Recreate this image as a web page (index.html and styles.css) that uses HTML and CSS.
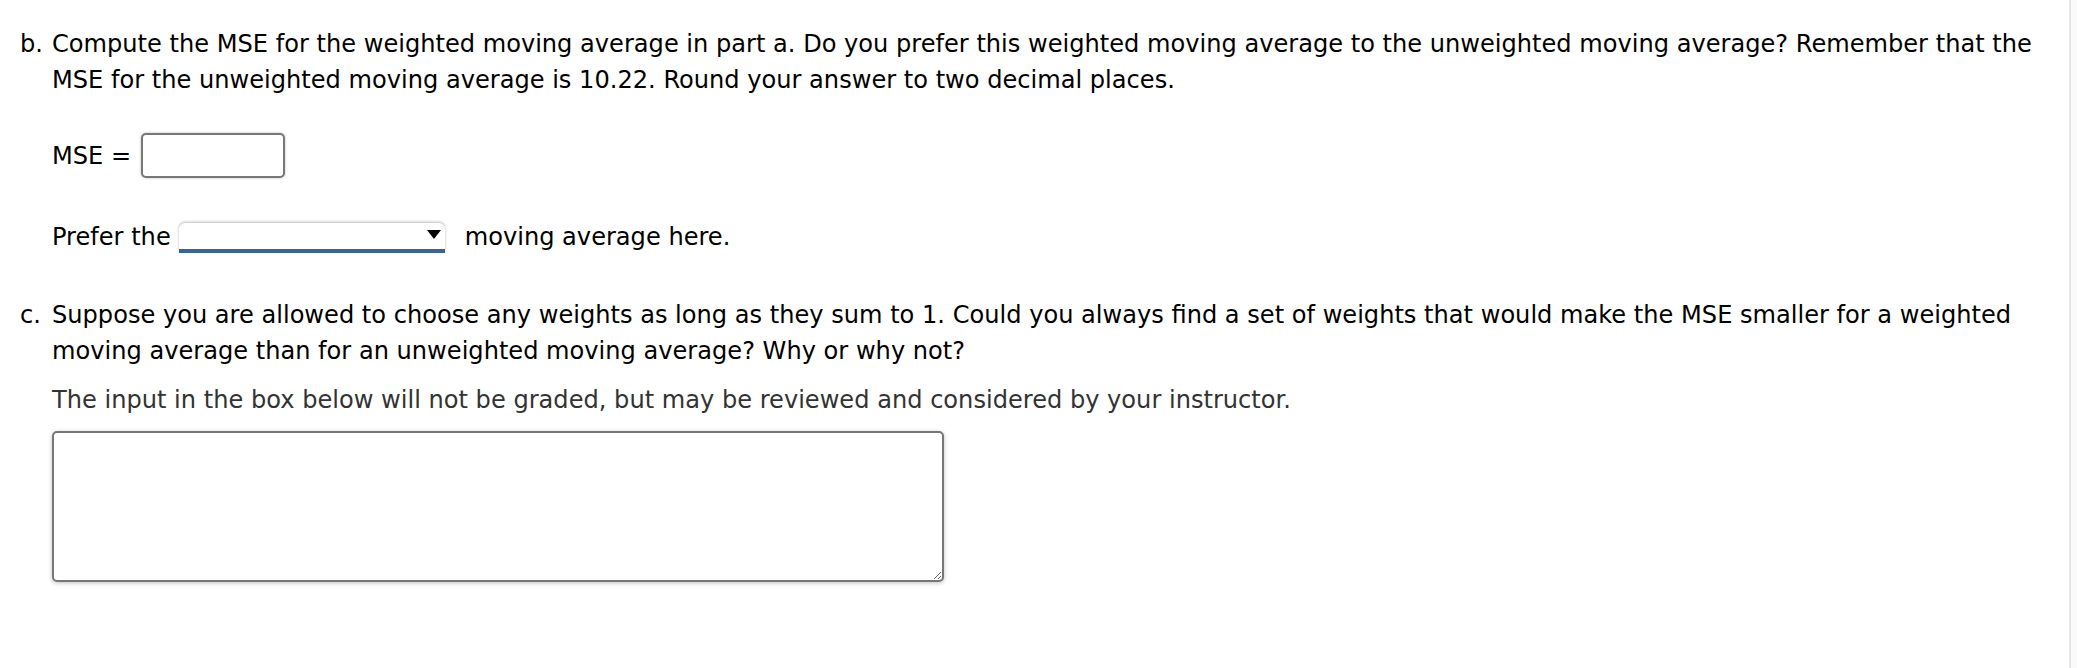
FILE: index.html
```html
<!DOCTYPE html>
<html lang="en">
<head>
<meta charset="utf-8">
<title>Weighted moving average</title>
<link rel="stylesheet" href="styles.css">
</head>
<body>
<div class="page">
  <main class="content">
    <section class="part">
      <span class="marker">b.</span>
      <div class="part-body">
        <p class="question">Compute the MSE for the weighted moving average in part a. Do you prefer this weighted moving average to the unweighted moving average? Remember that the MSE for the unweighted moving average is 10.22. Round your answer to two decimal places.</p>
        <div class="row mse-row">
          <span class="label">MSE =</span>
          <input class="num-input" type="text" aria-label="MSE">
        </div>
        <div class="row prefer-row">
          <span class="label">Prefer the</span>
          <div class="select" role="combobox" aria-label="Choice"><span class="caret"></span></div>
          <span class="label after">moving average here.</span>
        </div>
      </div>
    </section>
    <section class="part part-c">
      <span class="marker">c.</span>
      <div class="part-body">
        <p class="question">Suppose you are allowed to choose any weights as long as they sum to 1. Could you always find a set of weights that would make the MSE smaller for a weighted moving average than for an unweighted moving average? Why or why not?</p>
        <p class="note">The input in the box below will not be graded, but may be reviewed and considered by your instructor.</p>
        <textarea class="answer" aria-label="Answer"></textarea>
      </div>
    </section>
  </main>
  <div class="scroll-edge"></div>
</div>
</body>
</html>
```

FILE: styles.css
```css
html, body {
  margin: 0;
  padding: 0;
  background: #ffffff;
}

body {
  font-family: "DejaVu Sans", Verdana, sans-serif;
  font-size: 24.1px;
  line-height: 36px;
  color: #000000;
}

.page {
  display: flex;
  min-height: 668px;
}

.content {
  flex: 1;
  padding: 26px 0 0 20px;
}

.scroll-edge {
  width: 6px;
  border-left: 2px solid #e6e6e6;
  background: #fafafa;
  margin-left: 6px;
}

.part {
  display: flex;
}

.marker {
  width: 32px;
  flex: none;
}

.part-body {
  flex: 1;
  padding-right: 20px;
}

.question {
  margin: 0;
}

.row {
  display: flex;
  align-items: center;
}

.mse-row {
  margin-top: 35px;
  height: 45px;
}

.mse-row .label {
  margin-right: 10px;
}

.num-input {
  box-sizing: border-box;
  width: 144px;
  height: 45px;
  border: 2px solid #777777;
  border-radius: 5px;
  box-shadow: 0 0 3px rgba(0, 0, 0, 0.25);
  padding: 0 8px;
  font: inherit;
  outline: none;
}

.prefer-row {
  margin-top: 43px;
  height: 31px;
}

.prefer-row .label {
  margin-right: 8px;
}

.prefer-row .after {
  margin-left: 20px;
}

.select {
  box-sizing: border-box;
  width: 266px;
  height: 30px;
  background: #ffffff;
  border-bottom: 4px solid #3a6592;
  border-radius: 6px 6px 0 0;
  box-shadow: 0 -1px 3px rgba(0, 0, 0, 0.28);
  display: flex;
  align-items: center;
  justify-content: flex-end;
  padding-right: 4px;
  margin-top: 2px;
}

.caret {
  width: 0;
  height: 0;
  border-left: 7px solid transparent;
  border-right: 7px solid transparent;
  border-top: 9px solid #000000;
  margin-top: -2px;
}

.part-c {
  margin-top: 45px;
}

.note {
  margin: 13px 0 0 0;
  color: #333333;
}

.answer {
  display: block;
  box-sizing: border-box;
  width: 892px;
  height: 151px;
  margin-top: 13px;
  border: 2px solid #777777;
  border-radius: 5px;
  box-shadow: 0 1px 4px rgba(0, 0, 0, 0.25);
  font: inherit;
  padding: 6px 8px;
  outline: none;
}
```
